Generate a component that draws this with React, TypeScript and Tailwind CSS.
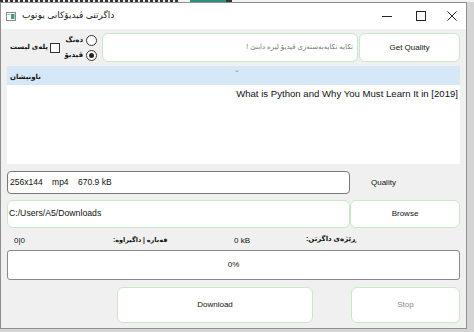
import React from 'react';

const green = 'border border-[#c8e8c8] bg-white rounded-[6px]';

function TitleIcon() {
  return (
    <svg width="10" height="9" viewBox="0 0 10 9">
      <rect x="0.5" y="0.5" width="9" height="8" fill="#fff" stroke="#8a8a8a" />
      <rect x="5" y="2" width="3.5" height="5" fill="#3aa56b" />
      <rect x="1.5" y="2" width="3" height="1" fill="#9bb" />
    </svg>
  );
}

function WinControls() {
  return (
    <div className="flex items-center h-full">
      <div className="w-[34px] flex justify-center">
        <svg width="10" height="10" viewBox="0 0 10 10">
          <line x1="0" y1="5.5" x2="10" y2="5.5" stroke="#222" strokeWidth="1" />
        </svg>
      </div>
      <div className="w-[34px] flex justify-center">
        <svg width="10" height="10" viewBox="0 0 10 10">
          <rect x="0.5" y="0.5" width="9" height="9" fill="none" stroke="#222" strokeWidth="1" />
        </svg>
      </div>
      <div className="w-[28px] flex justify-center">
        <svg width="10" height="10" viewBox="0 0 10 10">
          <path d="M0.5 0.5 L9.5 9.5 M9.5 0.5 L0.5 9.5" stroke="#222" strokeWidth="1" />
        </svg>
      </div>
    </div>
  );
}

export default function App() {
  return (
    <div className="w-[474px] h-[332px] bg-[#d4d4d4] overflow-hidden font-['Liberation_Sans','DejaVu_Sans',sans-serif] text-[#111]">
      {/* desktop strip behind */}
      <div className="h-[2px] flex">
        <div className="w-[180px] bg-[repeating-linear-gradient(90deg,#333_0_3px,#eee_3px_5px)]" />
        <div className="w-[10px] bg-[#f4f4f4]" />
        <div className="w-[36px] bg-[#2f8f7f]" />
        <div className="w-[6px] bg-[#333]" />
        <div className="flex-1 bg-[#f2f2f2]" />
      </div>

      <div className="w-[467px] h-[327px] border border-[#8f8f8f] flex flex-col bg-[#f0f0f0]">
        {/* title bar */}
        <div className="h-[26px] bg-white flex items-center justify-between pl-[5px]">
          <div className="flex items-center gap-[6px]">
            <TitleIcon />
            <span dir="rtl" className="text-[9px] text-[#222]">داگرتنی ڤیدیۆکانی یوتوب</span>
          </div>
          <WinControls />
        </div>

        <div className="flex-1 px-[6px] pt-[4px] flex flex-col">
          {/* row 1 */}
          <div className="flex h-[29px] gap-[1px]">
            <div className="w-[94px] flex items-center">
              <span dir="rtl" className="text-[7px] font-bold ml-[5px] w-[36px] whitespace-nowrap text-right">پلەی لیست</span>
              <div className="w-[10px] h-[10px] border border-[#333] bg-white ml-[2px]" />
              <div className="flex flex-col gap-[4px] ml-[6px]">
                <div className="flex items-center gap-[3px]">
                  <span dir="rtl" className="text-[7px] font-bold w-[17px] text-right">دەنگ</span>
                  <div className="w-[11px] h-[11px] rounded-full border border-[#333] bg-white" />
                </div>
                <div className="flex items-center gap-[3px]">
                  <span dir="rtl" className="text-[7px] font-bold w-[17px] text-right">ڤیدیۆ</span>
                  <div className="w-[11px] h-[11px] rounded-full border border-[#333] bg-white flex items-center justify-center">
                    <div className="w-[5px] h-[5px] rounded-full bg-[#222]" />
                  </div>
                </div>
              </div>
            </div>
            <div className={`${green} flex-1 flex items-center justify-end pr-[4px]`}>
              <span dir="rtl" className="text-[7px] text-[#777]">تکایە تکایەبەستەری ڤیدیۆ لیرە دابنێ !</span>
            </div>
            <div className={`${green} w-[101px] flex items-center justify-center text-[8px]`}>
              Get Quality
            </div>
          </div>

          {/* list */}
          <div className="mt-[4px] h-[98px] bg-white flex flex-col">
            <div className="h-[19px] bg-[#d6e8f7] relative flex items-end pb-[3px] pl-[3px]">
              <span className="absolute left-[227px] top-[-1px] text-[7px] text-[#888]">⌄</span>
              <span dir="rtl" className="text-[7px] font-bold">ناونیشان</span>
            </div>
            <div className="flex justify-end pr-[2px] pt-[2px] text-[9.6px]">
              What is Python and Why You Must Learn It in [2019]
            </div>
          </div>

          {/* quality row */}
          <div className="mt-[7px] flex items-center h-[23px]">
            <div className="w-[343px] h-full border border-[#787878] rounded-[4px] bg-white flex items-center pl-[2px] text-[8.5px] whitespace-pre">
              256x144    mp4    670.9 kB
            </div>
            <span className="ml-[21px] text-[8px]">Quality</span>
          </div>

          {/* path row */}
          <div className="mt-[6px] flex h-[28px]">
            <div className={`${green} w-[343px] flex items-center pl-[1px] text-[8.7px]`}>
              C:/Users/A5/Downloads
            </div>
            <div className={`${green} flex-1 flex items-center justify-center text-[8px]`}>
              Browse
            </div>
          </div>

          {/* stats */}
          <div className="h-[22px] relative text-[8px]">
            <span className="absolute left-[7px] top-[7px]">0|0</span>
            <span dir="rtl" className="absolute left-[106px] top-[7px] text-[6.5px] font-bold">قەبارە | داگیراوە:</span>
            <span className="absolute left-[227px] top-[7px]">0 kB</span>
            <span dir="rtl" className="absolute left-[299px] top-[6px] text-[7px] font-bold">ڕێژەی داگرتن:</span>
          </div>

          {/* progress */}
          <div className="h-[30px] border border-[#8a8a8a] rounded-[3px] bg-white flex items-center justify-center text-[8px]">
            0%
          </div>

          {/* buttons */}
          <div className="mt-[7px] flex h-[36px]">
            <div className={`${green} ml-[110px] w-[196px] flex items-center justify-center text-[8px]`}>
              Download
            </div>
            <div className={`${green} ml-auto w-[109px] flex items-center justify-center text-[8px] text-[#888]`}>
              Stop
            </div>
          </div>
        </div>
      </div>
    </div>
  );
}
